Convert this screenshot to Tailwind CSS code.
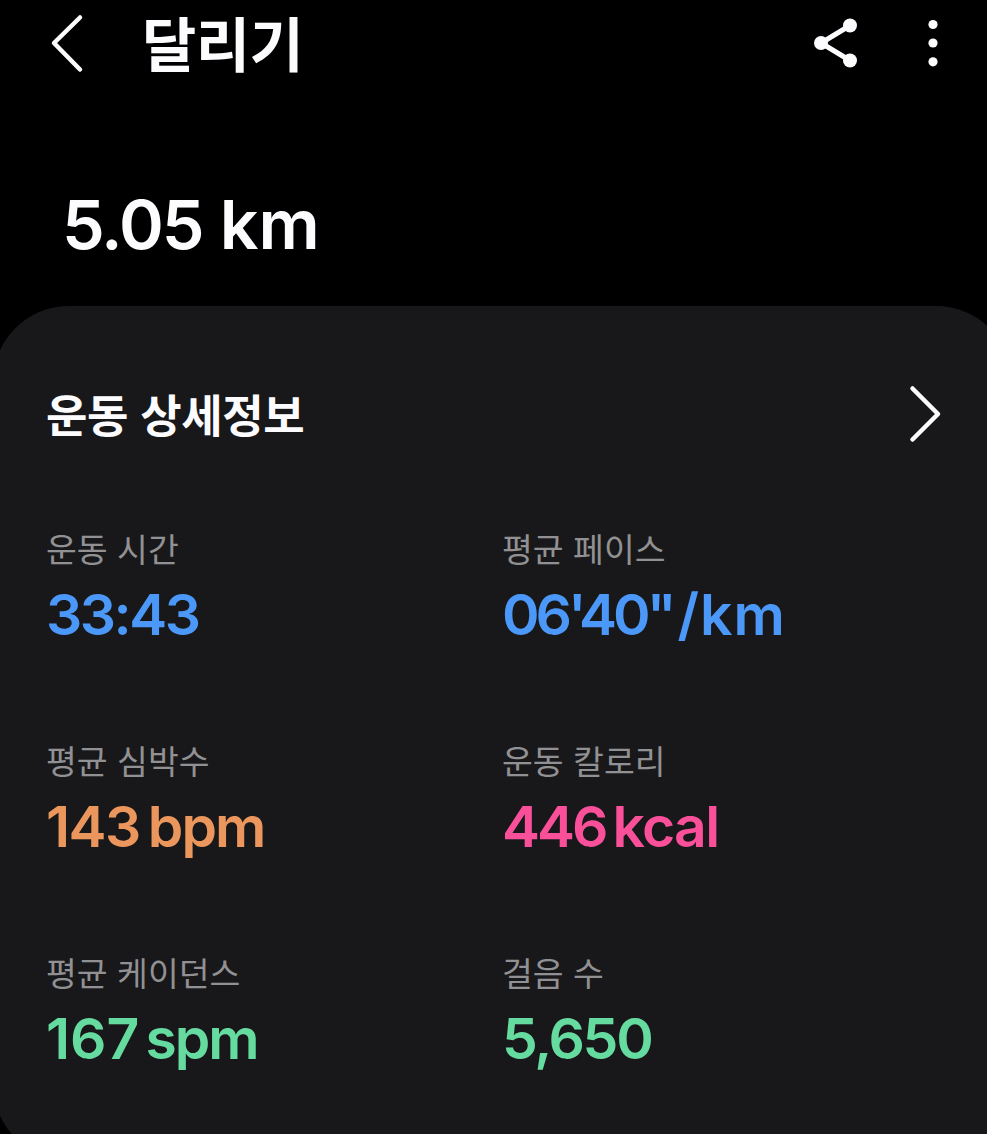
<!DOCTYPE html>
<html lang="ko">

<head>
    <meta charset="UTF-8">
    <meta name="viewport" content="width=device-width, initial-scale=1.0">
    <title>달리기</title>
    <script src="https://cdn.jsdelivr.net/npm/@tailwindcss/browser@4"></script>
</head>

<body class="bg-black overflow-hidden font-['Inter','Noto_Sans_CJK_KR',sans-serif]">
    <div class="h-[1134px] overflow-hidden text-[#fcfcff]">
        <header class="flex items-center h-[86px] pl-[46px] pr-[44px]">
            <button aria-label="뒤로">
                <svg class="w-10 h-16" viewBox="0 0 40 64" fill="none" stroke="currentColor" stroke-width="4.5" stroke-linecap="round" stroke-linejoin="round">
                    <path d="M34 6.5 8 32l26 26.500" />
                </svg>
            </button>
            <h1 class="ml-[56px] pb-[3px] text-[59px] leading-[83px] font-bold tracking-[-0.5px] font-['Noto_Sans_CJK_KR',sans-serif]">달리기</h1>
            <button class="ml-auto" aria-label="공유">
                <svg class="w-12 h-14" viewBox="0 0 48 56" fill="currentColor">
                    <path d="M38 10.5 9 28l29 17.5" fill="none" stroke="currentColor" stroke-width="5" />
                    <circle cx="38" cy="10.500" r="7" />
                    <circle cx="9" cy="28" r="7" />
                    <circle cx="38" cy="45.500" r="7" />
                </svg>
            </button>
            <button class="ml-[63px]" aria-label="더보기">
                <svg class="w-5 h-14" viewBox="0 0 20 56" fill="currentColor">
                    <circle cx="10" cy="9.500" r="4.600" />
                    <circle cx="10" cy="28" r="4.600" />
                    <circle cx="10" cy="46.800" r="4.600" />
                </svg>
            </button>
        </header>

        <div class="h-[220px] pt-[98px] pl-[62px] text-[68px] leading-[80px] font-semibold whitespace-pre"><span class="tracking-[-2px]">5.05</span> km</div>

        <main class="-ml-[7px] w-[1019px] h-[854px] rounded-[76px] bg-[#18181a] pl-[53px] pr-[68px]">
            <div class="flex items-center justify-between h-[216px]">
                <h2 class="text-[45px] leading-[60px] font-bold tracking-[-0.4px] font-['Noto_Sans_CJK_KR',sans-serif]">운동 상세정보</h2>
                <svg class="w-10 h-16" viewBox="0 0 40 64" fill="none" stroke="currentColor" stroke-width="4.5" stroke-linecap="round" stroke-linejoin="round">
                    <path d="M8.500 6.500 34 32 8.500 57.500" />
                </svg>
            </div>

            <dl class="grid grid-cols-[456px_1fr] auto-rows-[212px] pt-[3px] text-[57px] leading-[70px] font-semibold whitespace-nowrap">
                <div>
                    <dt class="text-[33.5px] leading-[50px] font-normal text-[#919193]">운동 시간</dt>
                    <dd class="mt-[5px] tracking-[-2.5px] text-[#4b98f8]">33:43</dd>
                </div>
                <div>
                    <dt class="text-[33.5px] leading-[50px] font-normal text-[#919193]">평균 페이스</dt>
                    <dd class="mt-[5px] tracking-[-4px] text-[#4b98f8]">06'40"<span class="ml-[5px] tracking-[1px]">/km</span></dd>
                </div>
                <div>
                    <dt class="text-[33.5px] leading-[50px] font-normal text-[#919193]">평균 심박수</dt>
                    <dd class="mt-[5px] tracking-[-1.5px] text-[#ea965c]">143<span class="ml-2 tracking-[-2px]">bpm</span></dd>
                </div>
                <div>
                    <dt class="text-[33.5px] leading-[50px] font-normal text-[#919193]">운동 칼로리</dt>
                    <dd class="mt-[5px] tracking-[-3px] text-[#fa509a]">446<span class="ml-[7px] tracking-[-1.6px]">kcal</span></dd>
                </div>
                <div>
                    <dt class="text-[33.5px] leading-[50px] font-normal text-[#919193]">평균 케이던스</dt>
                    <dd class="mt-[5px] text-[#65dba0]">167<span class="ml-[6px] tracking-[-2px]">spm</span></dd>
                </div>
                <div>
                    <dt class="text-[33.5px] leading-[50px] font-normal text-[#919193]">걸음 수</dt>
                    <dd class="mt-[5px] tracking-[-2.3px] text-[#65dba0]">5,650</dd>
                </div>
            </dl>
        </main>
    </div>
</body>

</html>
